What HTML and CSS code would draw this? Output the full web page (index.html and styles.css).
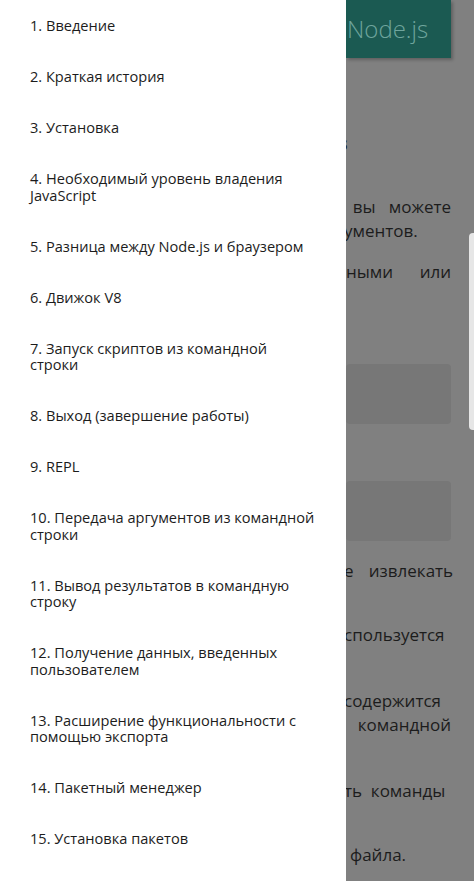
FILE: index.html
```html
<!DOCTYPE html>
<html lang="ru">
<head>
<meta charset="utf-8">
<title>Node.js</title>
<link rel="stylesheet" href="styles.css">
</head>
<body>
<div class="screen">
  <nav class="drawer">
    <ul class="toc">
      <li class="toc-item">1. Введение</li>
      <li class="toc-item">2. Краткая история</li>
      <li class="toc-item">3. Установка</li>
      <li class="toc-item">4. Необходимый уровень владения JavaScript</li>
      <li class="toc-item">5. Разница между Node.js и браузером</li>
      <li class="toc-item">6. Движок V8</li>
      <li class="toc-item">7. Запуск скриптов из командной строки</li>
      <li class="toc-item">8. Выход (завершение работы)</li>
      <li class="toc-item">9. REPL</li>
      <li class="toc-item">10. Передача аргументов из командной строки</li>
      <li class="toc-item">11. Вывод результатов в командную строку</li>
      <li class="toc-item">12. Получение данных, введенных пользователем</li>
      <li class="toc-item">13. Расширение функциональности с помощью экспорта</li>
      <li class="toc-item">14. Пакетный менеджер</li>
      <li class="toc-item">15. Установка пакетов</li>
    </ul>
  </nav>
  <main class="backdrop">
    <header class="topbar"><span class="topbar-title">Node.js</span></header>
    <div class="page">
      <p class="frag frag-heading">s</p>
      <p class="frag frag-right frag-a">вы&nbsp;&nbsp; можете</p>
      <p class="frag frag-cut">ументов.</p>
      <p class="frag frag-just frag-b"><span>ными</span><span>или</span></p>
      <div class="code code-1"></div>
      <div class="code code-2"></div>
      <p class="frag frag-right frag-c"><span class="sliver">е</span>&nbsp;&nbsp; извлекать</p>
      <p class="frag frag-cut frag-d">спользуется</p>
      <p class="frag frag-cut frag-e">содержится</p>
      <p class="frag frag-right">командной</p>
      <p class="frag frag-cut frag-f">ть&nbsp; команды</p>
      <p class="frag frag-g">файла.</p>
    </div>
    <div class="edge-tab"></div>
  </main>
</div>
</body>
</html>
```
FILE: styles.css
```css
html, body {
  margin: 0;
  padding: 0;
}
body {
  width: 474px;
  height: 881px;
  overflow: hidden;
  font-family: "Open Sans", "DejaVu Sans", sans-serif;
  background: #808080;
}
.screen {
  display: flex;
  height: 881px;
}
.drawer {
  width: 346px;
  flex: 0 0 346px;
  background: #ffffff;
  height: 881px;
  overflow: hidden;
}
.toc {
  list-style: none;
  margin: 0;
  padding: 0;
}
.toc-item {
  padding: 17.25px 29px 17.25px 30px;
  font-size: 14.6px;
  font-weight: 500;
  line-height: 16.5px;
  color: #1c1c1c;
}
.backdrop {
  position: relative;
  flex: 1;
  background: #808080;
  overflow: hidden;
}
.topbar {
  width: 105px;
  height: 58px;
  background: #1b5a52;
  box-shadow: 2px 2px 3px rgba(0,0,0,0.25);
  display: flex;
  align-items: center;
}
.topbar-title {
  font-size: 24px;
  font-weight: 300;
  color: #6fa59d;
  margin-left: 1px;
  margin-top: -2px;
}
.page {
  width: 105px;
  font-size: 17px;
  line-height: 24px;
  color: #1c1c1c;
}
.frag {
  margin: 0;
  white-space: nowrap;
}
.frag-heading {
  margin-top: 74px;
  font-weight: 700;
  text-indent: -7px;
  line-height: 24px;
}
.frag-right {
  text-align: right;
}
.frag-a { margin-top: 39px; }
.frag-b {
  margin-top: 17px;
  display: flex;
  justify-content: space-between;
}
.frag-cut { text-indent: -2px; }
.code {
  background: #777777;
  border-radius: 4px;
  height: 60px;
}
.code-1 { margin-top: 80px; }
.code-2 { margin-top: 57px; }
.frag-c { margin-top: 18px; position: relative; }
.sliver { position: relative; left: -2px; }
.frag-d { margin-top: 40px; }
.frag-e { margin-top: 42px; }
.frag-f { margin-top: 42px; }
.frag-g { margin-top: 40px; text-indent: 4px; }
.edge-tab {
  position: absolute;
  left: 123px;
  top: 233px;
  width: 10px;
  height: 197px;
  background: #e6e6e6;
  border-radius: 4px 0 0 4px;
}
```
